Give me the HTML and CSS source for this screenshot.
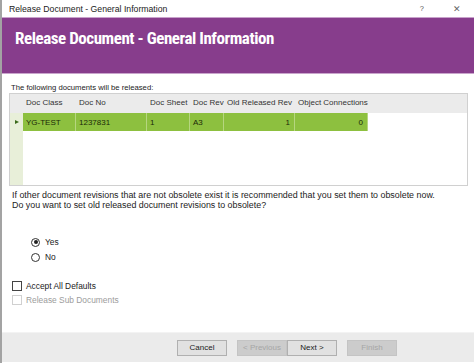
FILE: index.html
```html
<!DOCTYPE html>
<html>
<head>
<meta charset="utf-8">
<link rel="stylesheet" href="styles.css">
</head>
<body>
<div class="window">
  <div class="titlebar">
    <span class="wtitle">Release Document - General Information</span>
    <span class="tbtns"><span class="help">?</span><span class="close">✕</span></span>
  </div>
  <div class="banner"><h1>Release Document - General Information</h1></div>
  <div class="content">
    <p class="label">The following documents will be released:</p>
    <div class="grid">
      <div class="h corner"></div>
      <div class="h">Doc Class</div>
      <div class="h">Doc No</div>
      <div class="h">Doc Sheet</div>
      <div class="h">Doc Rev</div>
      <div class="h">Old Released Rev</div>
      <div class="h">Object Connections</div>
      <div class="h fill"></div>
      <div class="rh"><span class="arrow"></span></div>
      <div class="d">YG-TEST</div>
      <div class="d">1237831</div>
      <div class="d">1</div>
      <div class="d">A3</div>
      <div class="d num">1</div>
      <div class="d num">0</div>
      <div class="empty"></div>
    </div>
    <p class="msg">If other document revisions that are not obsolete exist it is recommended that you set them to obsolete now.<br>Do you want to set old released document revisions to obsolete?</p>
    <div class="radios">
      <label class="radio"><span class="rb on"></span>Yes</label>
      <label class="radio"><span class="rb"></span>No</label>
    </div>
    <div class="checks">
      <label class="check"><span class="cb"></span>Accept All Defaults</label>
      <label class="check disabled"><span class="cb"></span>Release Sub Documents</label>
    </div>
  </div>
  <div class="footer">
    <button class="btn">Cancel</button>
    <div class="pair">
      <button class="btn dis">&lt; Previous</button>
      <button class="btn">Next &gt;</button>
    </div>
    <button class="btn dis">Finish</button>
  </div>
</div>
</body>
</html>
```
FILE: styles.css
```css
* { box-sizing: border-box; }
html, body { margin: 0; padding: 0; background: #fff; }
.window {
  width: 474px; height: 363px;
  display: flex; flex-direction: column;
  border-left: 2px solid #a3a3a3;
  font-family: "Liberation Sans", Arial, sans-serif;
  color: #222;
  overflow: hidden;
}
.titlebar {
  height: 17px; display: flex; align-items: center; justify-content: space-between;
  padding: 0 13px 0 7px;
  font-family: "Liberation Sans", Arial, sans-serif; font-size: 8.7px; color: #222;
}
.tbtns { display: flex; gap: 29px; color: #555; }
.help { font-size: 7.5px; }
.close { font-size: 9px; color: #666; }
.banner {
  height: 57px; background: #873d8c;
  border-top: 1px solid #c8a2cb; border-bottom: 1px solid #c9a5cc;
  display: flex; align-items: flex-start; padding: 12px 0 0 13px;
}
.banner h1 {
  margin: 0; color: #fff; line-height: 17px;
  font-family: "Liberation Sans Narrow", "Roboto Condensed", "Liberation Sans", sans-serif;
  font-weight: bold; font-size: 17px; letter-spacing: -0.45px;
}
.content { flex: 1; padding: 0 6px 0 7px; display: flex; flex-direction: column; }
.label { margin: 8px 0 0 2px; font-size: 7.7px; line-height: 11px; color: #222; }
.grid {
  margin-top: 0; height: 93px;
  border: 1px solid #d0d0d0;
  display: grid;
  grid-template-columns: 13px 53px 71px 43px 34px 71px 73px 1fr;
  grid-template-rows: 19px 18px 1fr;
  font-size: 8px;
}
.h { background: #ebebeb; color: #333; padding: 4px 0 0 3px; white-space: nowrap; }
.rh { grid-row: 2 / 4; background: #e8efd9; position: relative; }
.arrow {
  position: absolute; left: 5px; top: 7px;
  width: 0; height: 0;
  border-left: 4px solid #3a6a1a; border-top: 2.5px solid transparent; border-bottom: 2.5px solid transparent;
}
.d { background: #8dc03f; color: #1b2a08; padding: 5px 0 0 3px; border-right: 1px solid #b6d67f; white-space: nowrap; }
.d.num { text-align: right; padding-right: 4px; }
.empty { grid-row: 2; grid-column: 8; }
.msg { margin: 5px 0 0 3px; font-size: 8.9px; line-height: 9.5px; color: #222; white-space: nowrap; }
.radios { margin: 27px 0 0 22px; display: flex; flex-direction: column; gap: 5px; }
.radio, .check { display: flex; align-items: center; font-size: 8.4px; line-height: 10px; }
.rb {
  width: 9px; height: 9px; border: 1px solid #333; border-radius: 50%;
  margin-right: 5px; position: relative; background: #fff;
}
.rb.on::after {
  content: ""; position: absolute; left: 1.5px; top: 1.5px; width: 4px; height: 4px;
  border-radius: 50%; background: #222;
}
.checks { margin: 19px 0 0 3px; display: flex; flex-direction: column; gap: 4px; }
.cb { width: 10px; height: 10px; border: 1px solid #444; margin-right: 4px; background: #fff; }
.check.disabled { color: #9c9c9c; }
.check.disabled .cb { border-color: #d0d0d0; }
.footer {
  height: 30px; margin-bottom: 1px; background: #ebebeb;
  border-top: 1px solid #f3f3f3;
  display: flex; align-items: center; padding: 0 0 0 175px; gap: 10px;
}
.pair { display: flex; }
.btn {
  width: 50px; height: 16px; padding: 0; margin: 0;
  font-family: "Liberation Sans", Arial, sans-serif; font-size: 8px; color: #222;
  background: #e1e1e1; border: 1px solid #b0b0b0;
}
.btn.dis { background: #cccccc; color: #a6a6a6; border-color: #c4c4c4; }
```
